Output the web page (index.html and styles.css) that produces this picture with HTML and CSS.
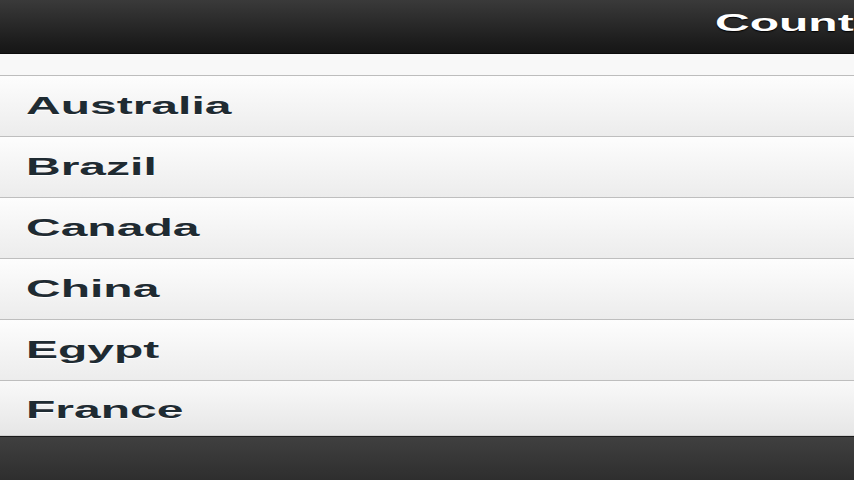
FILE: index.html
```html
<!DOCTYPE html>
<html lang="en">
<head>
<meta charset="utf-8">
<title>Countries</title>
<link rel="stylesheet" href="styles.css">
</head>
<body>
<div class="page">
  <header class="bar-header">
    <h1 class="title"><span class="stretch">Countries</span></h1>
  </header>
  <div class="spacer"></div>
  <ul class="list">
    <li class="item"><span class="stretch">Australia</span></li>
    <li class="item"><span class="stretch">Brazil</span></li>
    <li class="item"><span class="stretch">Canada</span></li>
    <li class="item"><span class="stretch">China</span></li>
    <li class="item"><span class="stretch">Egypt</span></li>
    <li class="item"><span class="stretch">France</span></li>
  </ul>
  <footer class="bar-footer"></footer>
</div>
</body>
</html>
```
FILE: styles.css
```css
html, body {
  margin: 0;
  padding: 0;
  height: 100%;
  overflow: hidden;
}
body {
  font-family: "Liberation Sans", Arial, sans-serif;
  background: #f8f8f8;
}
.page {
  display: flex;
  flex-direction: column;
  height: 480px;
  width: 854px;
  overflow: hidden;
}
.stretch {
  display: inline-block;
  transform: scaleX(2);
  transform-origin: 0 50%;
  white-space: nowrap;
}
.bar-header {
  flex: 0 0 53px;
  background: linear-gradient(#3a3a3a, #1c1c1c 80%, #161616);
  border-bottom: 1px solid #0c0c0c;
  overflow: hidden;
  white-space: nowrap;
}
.title {
  margin: 0;
  padding-left: 715px;
  font-size: 24px;
  font-weight: bold;
  line-height: 46px;
  color: #ffffff;
  text-shadow: 0 1px 1px #000;
}
.spacer {
  flex: 0 0 21px;
  background: #f8f8f8;
  border-bottom: 1px solid #bdbdbd;
}
.list {
  list-style: none;
  margin: 0;
  padding: 0;
  display: flex;
  flex-direction: column;
}
.item {
  height: 60px;
  line-height: 60px;
  padding-left: 26px;
  font-size: 24px;
  font-weight: bold;
  color: #1f2b32;
  text-shadow: 0 1px 0 #ffffff;
  background: linear-gradient(#fdfdfd, #ececec);
  border-bottom: 1px solid #bebebe;
  overflow: hidden;
}
.item:last-child {
  height: 54px;
  line-height: 58px;
  background: linear-gradient(#f9f9f9, #e6e6e6);
  border-bottom: 1px solid #cfcfcf;
}
.bar-footer {
  flex: 1 1 auto;
  border-top: 1px solid #1a1a1a;
  background: linear-gradient(#404040, #2e2e2e);
}
```
